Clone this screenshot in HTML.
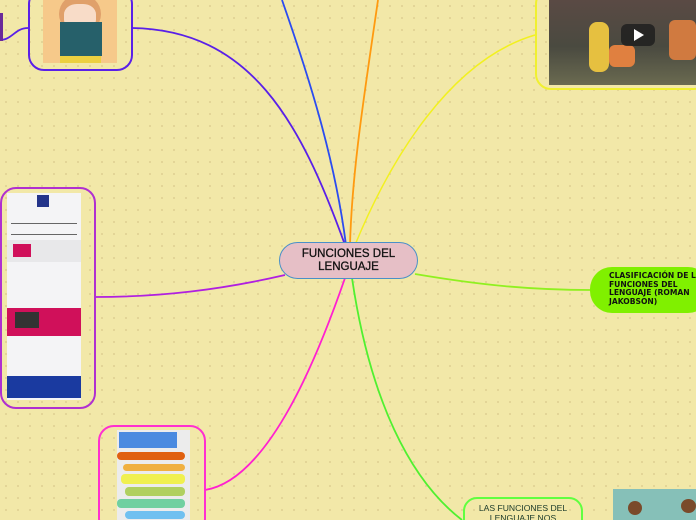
<!DOCTYPE html>
<html style="width:696px;height:520px;overflow:hidden"><head><meta charset="utf-8"><style>
body{margin:0;width:696px;height:520px;overflow:hidden;position:relative;font-family:"Liberation Sans",sans-serif;
background-color:#f2e8a8;background-image:radial-gradient(circle,#e2d496 1px,transparent 1.3px);background-size:12px 12px;}
.a{position:absolute;box-sizing:border-box}
</style></head><body>
<svg class="a" style="left:0;top:0" width="696" height="520" fill="none" stroke-width="1.8">
<path d="M132 28 C250 30 300 120 345 245" stroke="#5a20e8"/>
<path d="M282 0 C310 80 335 160 346 245" stroke="#2b4cf0"/>
<path d="M378 0 C365 90 352 170 350 245" stroke="#ff9a10"/>
<path d="M535 35 C450 60 390 160 355 245" stroke="#f2f020" stroke-width="1.5"/>
<path d="M415 274 C480 285 530 290 592 290" stroke="#90f020"/>
<path d="M352 278 C370 400 410 480 462 520" stroke="#50f030"/>
<path d="M345 278 C320 350 270 480 205 490" stroke="#ff20d0"/>
<path d="M285 275 C220 290 160 297 95 297" stroke="#b020e0"/>
<path d="M28 28 C15 28 12 40 0 40" stroke="#5a20e8"/>
</svg>
<div class="a" style="left:0;top:13px;width:3px;height:28px;background:#6a2a9a"></div>
<div class="a" style="left:28px;top:-12px;width:105px;height:83px;border:2px solid #5a20e8;border-radius:16px"></div>
<div class="a" style="left:43px;top:0;width:74px;height:63px;background:#f6c98a;overflow:hidden">
 <div class="a" style="left:16px;top:-6px;width:42px;height:40px;border-radius:50%;background:#e0a06a"></div>
 <div class="a" style="left:21px;top:4px;width:32px;height:26px;border-radius:40%;background:#f8dcc8"></div>
 <div class="a" style="left:17px;top:50px;width:41px;height:14px;background:#ecd040"></div>
 <div class="a" style="left:17px;top:22px;width:42px;height:34px;background:#26606a"></div>
</div>
<div class="a" style="left:535px;top:-12px;width:175px;height:102px;border:2px solid #f0f030;border-radius:16px"></div>
<div class="a" style="left:549px;top:0;width:147px;height:85px;background:linear-gradient(#5a4a44,#4a4a40 55%,#6a6a50);overflow:hidden">
 <div class="a" style="left:40px;top:22px;width:20px;height:50px;background:#e6c040;border-radius:8px"></div>
 <div class="a" style="left:60px;top:45px;width:26px;height:22px;background:#e08040;border-radius:6px"></div>
 <div class="a" style="left:120px;top:20px;width:27px;height:40px;background:#d07a40;border-radius:6px"></div>
 <div class="a" style="left:72px;top:24px;width:34px;height:22px;background:rgba(30,30,30,.85);border-radius:6px"></div>
 <div class="a" style="left:85px;top:29px;width:0;height:0;border-left:10px solid #fff;border-top:6px solid transparent;border-bottom:6px solid transparent"></div>
</div>
<div class="a" style="left:279px;top:242px;width:139px;height:37px;background:#e6bfc6;border:1.5px solid #4a90c8;border-radius:19px;font-size:11.5px;color:#111;text-align:center;line-height:13px;padding-top:5px;-webkit-text-stroke:0.3px #111">FUNCIONES DEL<br>LENGUAJE</div>
<div class="a" style="left:590px;top:267px;width:120px;height:46px;background:#80f000;border-radius:22px;font-size:7.6px;font-weight:bold;color:#111;line-height:8.6px;padding:5px 0 0 19px;font-family:'DejaVu Sans',sans-serif;white-space:nowrap">CLASIFICACIÓN DE LAS<br>FUNCIONES DEL<br>LENGUAJE (ROMAN<br>JAKOBSON)</div>
<div class="a" style="left:0;top:187px;width:96px;height:222px;border:2px solid #b030d0;border-radius:16px"></div>
<div class="a" style="left:7px;top:193px;width:74px;height:207px;background:#f4f4f6;overflow:hidden">
 <div class="a" style="left:30px;top:2px;width:12px;height:12px;background:#24348a"></div>
 <div class="a" style="left:4px;top:30px;width:66px;height:12px;border-top:1px solid #666;border-bottom:1px solid #666"></div>
 <div class="a" style="left:0;top:47px;width:74px;height:22px;background:#e8e8ea"></div>
 <div class="a" style="left:6px;top:51px;width:18px;height:13px;background:#d0105a"></div>
 <div class="a" style="left:0;top:115px;width:74px;height:28px;background:#d0105a"></div>
 <div class="a" style="left:8px;top:119px;width:24px;height:16px;background:#333"></div>
 <div class="a" style="left:0;top:183px;width:74px;height:22px;background:#1a3aa0"></div>
</div>
<div class="a" style="left:98px;top:425px;width:108px;height:110px;border:2px solid #ff30d0;border-radius:16px"></div>
<div class="a" style="left:117px;top:430px;width:73px;height:90px;background:#ececec">
 <div class="a" style="left:2px;top:2px;width:58px;height:16px;background:#4a8ae0"></div>
 <div class="a" style="left:0;top:22px;width:68px;height:8px;background:#e06010;border-radius:4px"></div>
 <div class="a" style="left:6px;top:34px;width:62px;height:7px;background:#f0b040;border-radius:4px"></div>
 <div class="a" style="left:4px;top:44px;width:64px;height:10px;background:#f0f050;border-radius:4px"></div>
 <div class="a" style="left:8px;top:57px;width:60px;height:9px;background:#b0d060;border-radius:4px"></div>
 <div class="a" style="left:0;top:69px;width:68px;height:9px;background:#70d0a0;border-radius:4px"></div>
 <div class="a" style="left:8px;top:81px;width:60px;height:8px;background:#70c0f0;border-radius:4px"></div>
</div>
<div class="a" style="left:463px;top:497px;width:120px;height:40px;border:2px solid #60ff40;border-radius:14px;font-size:8.6px;color:#1a3a2a;text-align:center;line-height:10px;padding-top:4px">LAS FUNCIONES DEL<br>LENGUAJE NOS</div>
<div class="a" style="left:613px;top:489px;width:83px;height:31px;background:#86c0b8;overflow:hidden">
 <div class="a" style="left:15px;top:12px;width:14px;height:14px;border-radius:50%;background:#7a4a2a"></div>
 <div class="a" style="left:68px;top:10px;width:15px;height:14px;border-radius:50%;background:#7a4a2a"></div>
</div>
</body></html>
